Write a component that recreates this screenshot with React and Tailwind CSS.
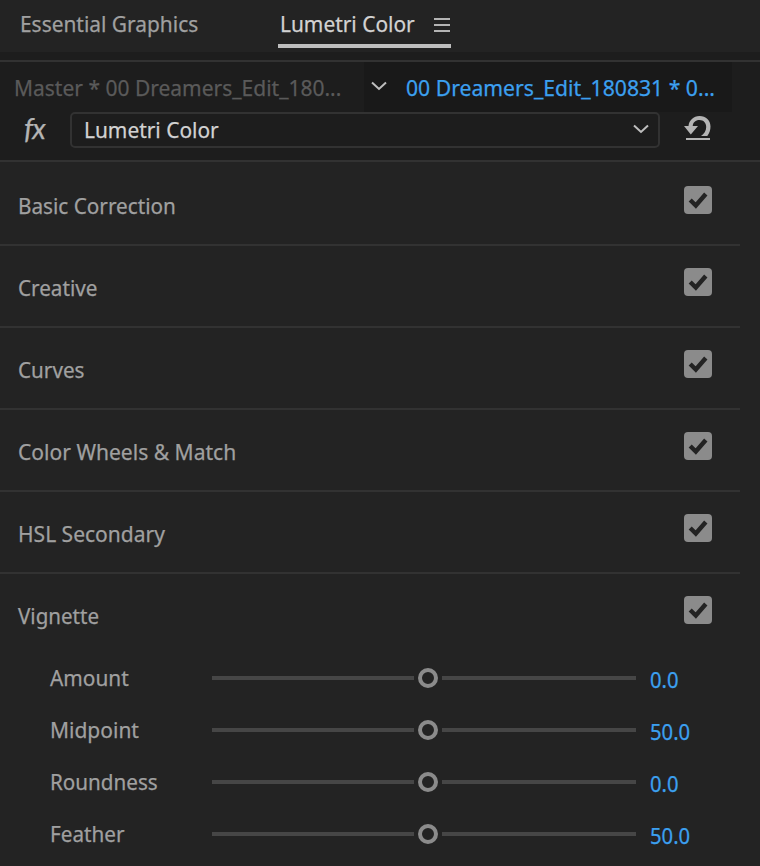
import { useState } from "react";

const sections = [
  { name: "Basic Correction", scale: "scale-x-[0.942]" },
  { name: "Creative", scale: "scale-x-[0.94]" },
  { name: "Curves", scale: "scale-x-[0.94]" },
  { name: "Color Wheels & Match", scale: "scale-x-[0.957]" },
  { name: "HSL Secondary", scale: "scale-x-[0.956]" },
  { name: "Vignette", scale: "scale-x-[0.935]" },
];

const sliders = [
  { name: "Amount", value: "0.0", scale: "scale-x-[0.948]" },
  { name: "Midpoint", value: "50.0", scale: "scale-x-[0.954]" },
  { name: "Roundness", value: "0.0", scale: "scale-x-[0.938]" },
  { name: "Feather", value: "50.0", scale: "scale-x-[0.94]" },
];

const Label = ({ className = "", children }) => (
  <span className={`inline-block origin-left whitespace-nowrap ${className}`}>{children}</span>
);

const Chevron = ({ className }) => (
  <svg className={className} width="16" height="10" viewBox="0 0 16 10" fill="none" stroke="#bebebe" strokeWidth="2">
    <path d="M1 1.5 8 8l7-6.5" />
  </svg>
);

const ResetIcon = () => (
  <svg width="28" height="26" viewBox="0 0 28 26" fill="#b4b4b4">
    <path d="M4.500 10C5 4.500 9.500 0 15.500 0 22 0 26.500 4.500 26.500 10.500c0 3.500-1 6.800-3.200 9.500h-6.300c3-2 5.200-5.200 5.200-9 0-4.200-2.700-7-6.700-7S9 6.500 8.700 10h5.300L6.800 18.500 0 10z" />
    <path d="M2 22h24v2H2z" />
  </svg>
);

const Section = ({ name, scale, last }) => {
  const [enabled, setEnabled] = useState(true);

  return (
    <div className={`flex h-[82px] w-[740px] items-start pl-[18px] ${last ? "" : "border-b-2 border-[#323232]"}`}>
      <h2 className="w-[666px] pt-[25px] leading-8 text-[#a0a0a0]">
        <Label className={scale}>{name}</Label>
      </h2>
      <button
        aria-label={name}
        aria-pressed={enabled}
        onClick={() => setEnabled(!enabled)}
        className="mt-[22px] h-7 w-7 rounded bg-[#8b8b8b]"
      >
        {enabled && (
          <svg width="28" height="28" viewBox="0 0 28 28" fill="none" stroke="#232323" strokeWidth="4.400">
            <path d="M6.200 14 11.800 19.500 21.800 8" />
          </svg>
        )}
      </button>
    </div>
  );
};

const SliderRow = ({ name, value, scale }) => (
  <div className="flex h-[52px] items-center pl-[50px]">
    <div className="w-[162px] pb-0.5 text-[#a0a0a0]">
      <Label className={scale}>{name}</Label>
    </div>
    <div className="flex w-[424px] items-center">
      <div className="h-1 w-[202px] bg-[#464646]"></div>
      <div className="mx-1 h-5 w-5 rounded-full border-4 border-[#8b8b8b]"></div>
      <div className="h-1 flex-1 bg-[#464646]"></div>
    </div>
    <div className="pt-0.5 pl-3.5 text-[#3ca0f0]">
      <Label className="scale-x-[0.92]">{value}</Label>
    </div>
  </div>
);

const App = () => {
  return (
    <div className="h-[866px] w-[760px] overflow-hidden bg-[#232323] font-['Noto_Sans',sans-serif] text-[22px] leading-8 [-webkit-text-stroke:0.25px]">
      <div className="flex h-[52px] pl-5 pt-[7px]">
        <div className="w-[258px] text-[#a0a0a0]">
          <Label className="scale-x-[0.95]">Essential Graphics</Label>
        </div>
        <div className="flex h-[41px] w-[173px] border-b-4 border-[#bebebe] pl-0.5 text-[#d2d2d2]">
          <div className="w-[154px]">
            <Label className="scale-x-[0.95]">Lumetri Color</Label>
          </div>
          <div className="mt-[11px] flex h-[14px] w-4 flex-col justify-between">
            <div className="h-0.5 bg-[#b4b4b4]"></div>
            <div className="h-0.5 bg-[#b4b4b4]"></div>
            <div className="h-0.5 bg-[#b4b4b4]"></div>
          </div>
        </div>
      </div>

      <div className="h-[110px] border-b-2 border-[#323232] bg-[#1d1d1d] pt-2">
        <div className="flex h-[52px] border-t-2 border-[#323232]">
          <div className="w-[364px] pl-3.5 pt-[9px] text-[#5a5a5a]">
            <Label className="scale-x-[0.954]">Master * 00 Dreamers_Edit_180...</Label>
          </div>
          <div className="flex w-[368px] bg-[#191919] pl-[7px] pt-[9px] text-[#3ca0f0]">
            <Chevron className="mt-2.5 mr-[19px]" />
            <Label className="scale-x-[0.962]">00 Dreamers_Edit_180831 * 0...</Label>
          </div>
        </div>
        <div className="flex">
          <div className="w-[70px] pl-6 font-['Lato','Noto_Sans',sans-serif] text-[29px] italic tracking-[-1px] text-[#b4b4b4]">
            <Label>fx</Label>
          </div>
          <div className="flex h-9 w-[590px] rounded-[5px] border-2 border-[#323232] pl-3 text-[#d2d2d2]">
            <div className="-mt-px w-[549px]">
              <Label className="scale-x-[0.95]">Lumetri Color</Label>
            </div>
            <Chevron className="mt-2.5" />
          </div>
          <div className="pl-6 pt-1">
            <ResetIcon />
          </div>
        </div>
      </div>

      <div className="pt-0.5">
        {sections.map((section, index) => (
          <Section key={section.name} {...section} last={index === sections.length - 1} />
        ))}
      </div>
      <div className="-mt-1">
        {sliders.map((slider) => (
          <SliderRow key={slider.name} {...slider} />
        ))}
      </div>
    </div>
  );
};

export default App;
